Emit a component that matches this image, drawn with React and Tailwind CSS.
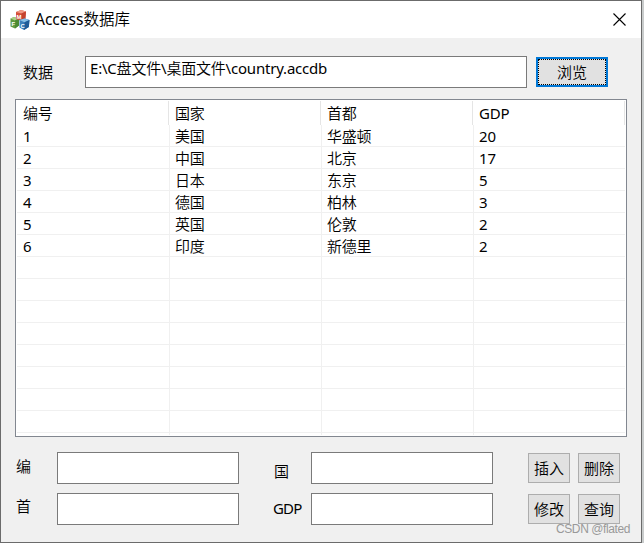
const COLUMNS = ['编号', '国家', '首都', 'GDP'];

const COUNTRIES = [
  ['1', '美国', '华盛顿', '20'],
  ['2', '中国', '北京', '17'],
  ['3', '日本', '东京', '5'],
  ['4', '德国', '柏林', '3'],
  ['5', '英国', '伦敦', '2'],
  ['6', '印度', '新德里', '2'],
];

// The list keeps drawing grid lines below the last record
const ROW_COUNT = 15;

const CELL_WIDTHS = ['w-[153px]', 'w-[152px]', 'w-[152px]', 'w-[151px]'];

function MfcIcon() {
  return (
    <svg width="20" height="20" viewBox="0 0 20 20" className="shrink-0">
      <path d="M.5 8.500 4 7l5 1.500v7L5 18.500l-4.500-2z" fill="#5f9a3f" />
      <path d="M.5 8.500 4 7l5 1.500-4 2z" fill="#a9cf86" />
      <path d="m5 10.500 4-2v7l-4 3z" fill="#4a8a33" />
      <path d="M6 2 11 0l5 1.500-.7 7.500-4.300 1.700L6 9z" fill="#d5503a" />
      <path d="M6 2 11 0l5 1.500-4.500 2z" fill="#f09a85" />
      <path d="m11.500 3.500 4.500-2-.7 7.500-4.300 1.700z" fill="#c4432f" />
      <path d="m9.500 10 5-1.500 5 1.500-.7 7-4.800 3-4.500-2.500z" fill="#3c7fba" />
      <path d="m9.500 10 5-1.500 5 1.500-5 2.200z" fill="#86bfe6" />
      <path d="m14.500 12.200 5-2.200-.7 7-4.800 3z" fill="#1f5c98" />
      <g fill="#fff" fontFamily="Liberation Sans, sans-serif" fontWeight="700" fontSize="6">
        <text x="6.500" y="8.500">M</text>
        <text x="1.500" y="15.500">F</text>
        <text x="10.500" y="17.500">C</text>
      </g>
    </svg>
  );
}

function TitleBar() {
  return (
    <div className="flex h-[37px] items-center bg-white pl-[9px] pr-[15px]">
      <MfcIcon />
      <h1 className="ml-[5px] flex-1 text-[15.500px] leading-[37px]">Access数据库</h1>
      <svg width="13" height="13" viewBox="0 0 13 13" stroke="#000" strokeWidth="1.1" fill="none">
        <path d="M.5.5l12 12M12.500.5l-12 12" />
      </svg>
    </div>
  );
}

function Field({ label, labelClass }) {
  return (
    <label className="flex h-8">
      <span className={`shrink-0 leading-8 ${labelClass}`}>{label}</span>
      <input className="h-8 w-[182px] border border-[#7a7a7a] bg-white px-1 outline-none" />
    </label>
  );
}

function Button({ children }) {
  return (
    <button className="h-[30px] w-[42px] border border-[#adadad] bg-[#e1e1e1] leading-7">
      {children}
    </button>
  );
}

function CountryList() {
  const rows = Array.from({ length: ROW_COUNT }, (_, i) => COUNTRIES[i] || ['', '', '', '']);

  return (
    <div className="mx-[14px] mt-[11px] h-[338px] border border-[#828790] bg-white p-px">
      <div className="flex h-6">
        {COLUMNS.map(name => (
          <div key={name} className="w-[152px] border-r border-[#e5e5e5] pl-[6px] leading-6 tracking-[-0.2px]">
            {name}
          </div>
        ))}
      </div>
      <div className="h-[310px] overflow-hidden">
        {rows.map((row, i) => (
          <div key={i} className="flex h-[22px] border-b border-[#f0f0f0]">
            {row.map((cell, j) => (
              <div key={j} className={`h-[22px] shrink-0 leading-[22px] tracking-[-0.2px] ${j === 0 ? 'pl-[6px]' : 'pl-[5px]'} ${CELL_WIDTHS[j]} ${j < 3 ? 'border-r border-[#f0f0f0]' : ''}`}>
                {cell}
              </div>
            ))}
          </div>
        ))}
      </div>
    </div>
  );
}

export default function App() {
  return (
    <div className="relative h-[543px] w-[644px] overflow-hidden bg-[#c9cccc] font-['Noto_Sans','Noto_Sans_CJK_SC_DemiLight','Noto_Sans_CJK_SC_Light','Noto_Sans_CJK_SC',sans-serif] text-[15px] text-black">
      <div className="h-[543px] w-[642px] border border-[#6b6b6b] bg-[#f0f0f0]">
        <TitleBar />

        <div className="flex pl-[22px] pt-[18px]">
          <span className="w-[62px] leading-8">数据</span>
          <div className="h-8 w-[442px] border border-[#7a7a7a] bg-white pl-1 leading-[22px] tracking-[-0.2px]">
            E:\C盘文件\桌面文件\country.accdb
          </div>
          <button className="ml-[9px] mt-px h-[30px] w-[72px] border-2 border-[#0078d7] bg-[#e1e1e1]">
            <span className="block h-[26px] border border-dotted border-black leading-6">浏览</span>
          </button>
        </div>

        <CountryList />

        <div className="flex pl-[14px] pt-[15px]">
          <div className="flex flex-col gap-[9px]">
            <Field label="编" labelClass="w-[42px] -mt-[2px] pl-px" />
            <Field label="首" labelClass="w-[42px] -mt-[3px] pl-px" />
          </div>
          <div className="ml-[34px] flex flex-col gap-[9px]">
            <Field label="国" labelClass="w-[38px] mt-[3px] pl-px" />
            <Field label="GDP" labelClass="w-[38px] -mt-px tracking-[-0.8px]" />
          </div>
          <div className="ml-[35px] mt-px grid h-[71px] grid-cols-[42px_42px] gap-x-2 gap-y-[11px]">
            <Button>插入</Button>
            <Button>删除</Button>
            <Button>修改</Button>
            <Button>查询</Button>
          </div>
        </div>
      </div>

      <span className="absolute left-[556px] top-[520px] font-['Liberation_Sans',sans-serif] text-[12px] leading-[18px] tracking-[-0.4px] text-[#999]">
        CSDN @flated
      </span>
    </div>
  );
}
